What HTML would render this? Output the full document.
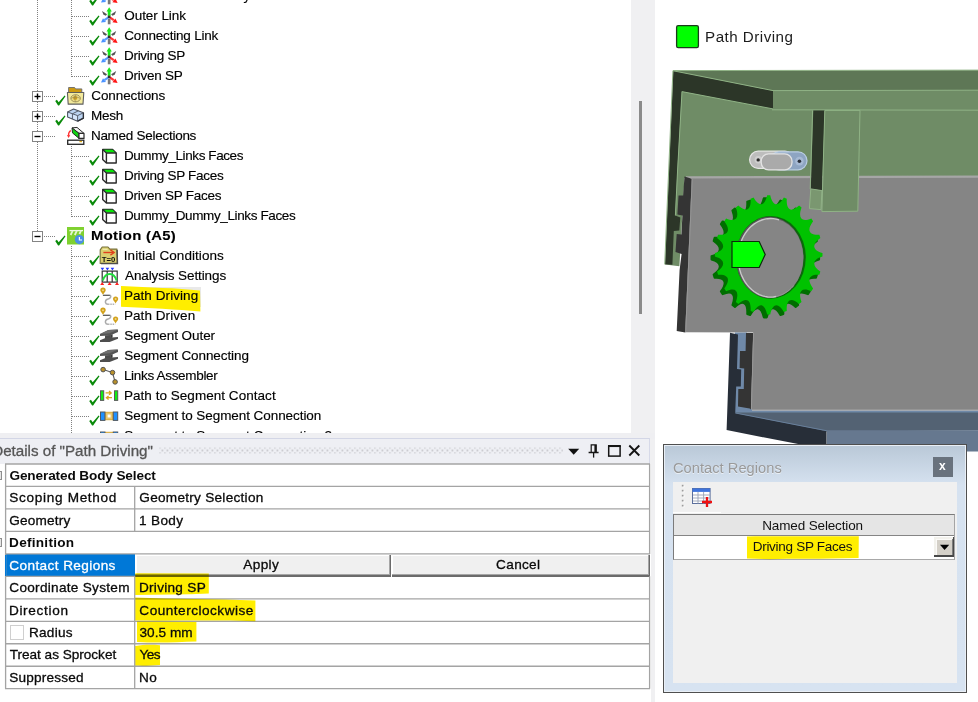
<!DOCTYPE html>
<html lang="en">
<head>
<meta charset="utf-8">
<title>Mechanical - Path Driving</title>
<style>
html,body{margin:0;padding:0;background:#fff;}
body{width:978px;height:702px;overflow:hidden;font-family:"Liberation Sans",sans-serif;color:#000;}
#app{position:relative;width:978px;height:702px;overflow:hidden;background:#fff;}
.t{position:absolute;white-space:nowrap;display:block;}
.abs{position:absolute;}
#tree{position:absolute;left:0;top:0;width:630.6px;height:433.5px;background:#fff;overflow:hidden;}
#tree svg{position:absolute;left:0;top:0;}
#gutter{position:absolute;left:630.6px;top:0;width:24.8px;height:702px;background:#f0f0f2;}
#thumb{position:absolute;left:8.5px;top:100.9px;width:2.9px;height:213.4px;background:#8b8b8b;}
#strip{position:absolute;left:0;top:433.4px;width:655.2px;height:6px;background:#efeff2;}
#dtitle{position:absolute;left:0;top:438.3px;width:650.4px;height:25.7px;background:#eeeff4;border-top:1.2px solid #d3d6e6;border-right:1.2px solid #d6d9e8;box-sizing:border-box;}
#dbody{position:absolute;left:0;top:464px;width:651px;height:238px;background:#fff;}
#dgrid{position:absolute;left:0;top:0;}
.hl{position:absolute;background:#ffee00;mix-blend-mode:multiply;}
#scene{position:absolute;left:655.3px;top:0;width:322.7px;height:702px;background:#fff;overflow:hidden;}
#scene svg{position:absolute;left:-655.3px;top:0;}
#dlg{position:absolute;left:663px;top:443.5px;width:304px;height:249.5px;box-sizing:border-box;border:1px solid #4f4f4f;background:linear-gradient(#b9c8d7 0px,#d6e2f0 40px,#d7e3f1 100%);box-shadow:inset 0 0 0 1px #e9eff6;}
.dt{-webkit-text-stroke:0.3px currentColor;}
.tr{-webkit-text-stroke:0.15px currentColor;}

</style>
</head>
<body>
<svg width="0" height="0" style="position:absolute">
<defs>

<!-- green status check, 10.5 x 10 -->
<g id="i-check"><path d="M0.2,5.6 L1.9,4.3 L3.7,6.8 L9.6,0 L10.5,0.7 L4.1,10 L3.1,10 Z" fill="#098a09"/></g>

<!-- coordinate system triad 16 x 17 -->
<g id="i-cs">
  <path d="M1,3.7 L6,7 L4.9,8.5 L2.5,7.5 Z" fill="#555"/>
  <path d="M15.2,3.7 L10.2,7 L11.3,8.5 L13.7,7.5 Z" fill="#555"/>
  <rect x="6.8" y="11.6" width="2.7" height="5.4" fill="#7a7a7a"/>
  <path d="M7.4,10 L3.4,12.8" stroke="#5a9cff" stroke-width="2.2"/>
  <path d="M0,15.3 L2,10.9 L5,14.6 Z" fill="#4a92ff"/>
  <path d="M8.8,10 L12.8,12.9" stroke="#ff3535" stroke-width="2.2"/>
  <path d="M16.6,15.6 L14.4,11.1 L11.4,14.9 Z" fill="#ff1515"/>
  <rect x="6.75" y="3.6" width="2.8" height="5" fill="#19e619"/>
  <path d="M8.15,0 L5.5,4.3 L10.8,4.3 Z" fill="#19e619"/>
  <rect x="6.8" y="8.3" width="2.7" height="2.6" fill="#333"/>
</g>

<!-- connections folder 17 x 17 -->
<g id="i-conn">
  <path d="M1.6,0.6 L7.6,0.6 L8.6,2 L14.8,2 L14.8,6 L1.6,6 Z" fill="#cc9a12" stroke="#6a6a6a" stroke-width="0.9" stroke-linejoin="round"/>
  <path d="M0.4,5.6 L16.8,5.6 L16,17.2 L1.2,17.2 Z" fill="#f3ea9c" stroke="#5e5e5e" stroke-width="1.1" stroke-linejoin="round"/>
  <ellipse cx="8.6" cy="11.4" rx="4.8" ry="3.6" fill="#ecdb82" stroke="#8e8250" stroke-width="0.8"/>
  <ellipse cx="8.2" cy="11" rx="2.1" ry="1.9" fill="#cfa020"/>
  <path d="M4,11.8 C6,9.6 11,9.6 13.2,11.8 M8.8,7.8 C7.4,9.8 7.6,12.8 8.6,15" fill="none" stroke="#8e8250" stroke-width="0.6"/>
</g>

<!-- mesh 17 x 13 -->
<g id="i-mesh">
  <path d="M0.6,3.6 L6.6,0.6 L16.4,4.4 L16.4,9.8 L10.6,12.8 L0.6,8.6 Z" fill="#bcd4f2" stroke="#4e5460" stroke-width="1.1" stroke-linejoin="round"/>
  <path d="M0.6,3.6 L10.6,7.2 L16.4,4.4 M10.6,7.2 L10.6,12.8 M5.4,5.4 L5.4,10.6 M5.4,5.4 L11.4,2.4" fill="none" stroke="#59606e" stroke-width="1"/>
  <path d="M1.5,4.8 L4.7,6 L4.7,9.4 L1.5,8.2 Z M6.3,6.6 L9.9,7.9 L9.9,11.6 L6.3,10.2 Z" fill="#d8e7fb"/>
  <path d="M10.6,12.8 L16.4,9.8 L16.4,4.4" fill="none" stroke="#2e3138" stroke-width="1.3" stroke-linejoin="round"/>
</g>

<!-- named selections 17 x 18 -->
<g id="i-ns">
  <path d="M5,1 L10,0.5 L17,6.5 L12,6.5 Z" fill="#f2f2f2" stroke="#2a2a2a" stroke-width="1" stroke-linejoin="round"/>
  <path d="M5,1 L12,6.5 L12,11.5 L5.5,6 Z" fill="#12d212" stroke="#2a2a2a" stroke-width="1" stroke-linejoin="round"/>
  <path d="M12,6.5 L17,6.5 L17,11.5 L12,11.5 Z" fill="#fff" stroke="#2a2a2a" stroke-width="1.2" stroke-linejoin="round"/>
  <path d="M3.8,3.6 C2,4.8 1.3,6.6 1.6,8.8" fill="none" stroke="#ff3030" stroke-width="1.3"/>
  <path d="M0,8 L3.3,8.3 L1.5,11 Z" fill="#ff3030"/>
  <rect x="0.7" y="13.3" width="16.1" height="4.1" fill="#fff" stroke="#262626" stroke-width="1.3"/>
  <rect x="12.4" y="14" width="2.6" height="1.3" fill="#e0b020"/>
</g>

<!-- face named selection cube 15 x 15 -->
<g id="i-face">
  <path d="M0.7,0.7 L10.6,0.7 L14.2,4.2 L14.2,14.2 L4.4,14.2 L0.7,10.6 Z" fill="#fff" stroke="#2a2a2a" stroke-width="1.4" stroke-linejoin="round"/>
  <path d="M1.2,1 L10.5,1 L13.6,4 L4.6,4 Z" fill="#06e606"/>
  <path d="M0.7,0.7 L4.4,4.2 L14.2,4.2 M4.4,4.2 L4.4,14.2" fill="none" stroke="#2a2a2a" stroke-width="1.4"/>
</g>

<!-- motion 17 x 17.5 -->
<g id="i-motion">
  <rect x="0" y="0" width="17" height="17.5" fill="#7fd12f"/>
  <path d="M2.4,3.6 L16,3.6" stroke="#f4fbe9" stroke-width="1.3"/>
  <path d="M5.6,3.8 L3.6,8 M9.8,3.8 L7.8,8 M14,3.8 L12.4,7" stroke="#e6f6d4" stroke-width="1.8"/>
  <circle cx="12.4" cy="12.6" r="4.6" fill="#4b8fe6"/>
  <path d="M12.4,10 L12.4,13 L15,13" fill="none" stroke="#fff" stroke-width="1.2"/>
</g>

<!-- initial conditions 19 x 18.5 -->
<g id="i-ic">
  <path d="M0.8,3.8 L2.8,0.9 L8.6,0.9 L10.4,3 L17.6,3 L18,17.4 L0.8,17.4 Z" fill="#dad070" stroke="#77703a" stroke-width="1.1" stroke-linejoin="round"/>
  <path d="M1.6,17.4 L18,17.4 L17.7,4" fill="none" stroke="#4c4c4c" stroke-width="1.5"/>
  <path d="M3.2,3.2 L8.2,3.2" stroke="#f3efc0" stroke-width="1"/>
  <path d="M4,6.4 L13.6,6.4" stroke="#e0401c" stroke-width="1.4"/>
  <path d="M11,3.8 L14.8,6.4 L11,9" fill="none" stroke="#e0401c" stroke-width="1.3"/>
</g>

<!-- analysis settings 19 x 18 -->
<g id="i-as">
  <rect x="2.4" y="4" width="15" height="11" fill="#fff" stroke="#333" stroke-width="1.2"/>
  <path d="M7.4,4 L7.4,15 M12.4,4 L12.4,15" stroke="#333" stroke-width="1.2"/>
  <path d="M3,13.4 C5.8,4.8 14,4.8 16.8,13.4" fill="none" stroke="#1fdc3a" stroke-width="1.9"/>
  <path d="M0.8,0.6 L4.4,0.6 L2.6,3.4 Z M5.8,0.6 L9.4,0.6 L7.6,3.4 Z M10.8,0.6 L14.4,0.6 L12.6,3.4 Z" fill="#2337ff"/>
  <path d="M0.4,17.8 L4.4,17.8 L2.4,15 Z M7.8,17.8 L11.8,17.8 L9.8,15 Z M15.2,17.8 L19.2,17.8 L17.2,15 Z" fill="#ff2020"/>
</g>

<!-- path 17 x 16 : origin = (100,287.5) -->
<g id="i-path">
  <path d="M9.9,7.8 C11.6,8.3 10.6,11 8.2,11.4 C6,11.9 5.2,13.4 5.5,15.1 C5.8,16.5 7,16.8 8,16.8" fill="none" stroke="#ababab" stroke-width="1.5"/>
  <path d="M8,16.8 L15.2,16.8" fill="none" stroke="#b4b4b4" stroke-width="1.4" stroke-dasharray="1.5 0.8"/>
  <path d="M2.9,7.8 L9.9,7.8" stroke="#5a5a5a" stroke-width="1.3"/>
  <path d="M3,7.3 C2,5.2 0.3,4.4 0.3,2.8 A2.7,2.7 0 0 1 5.7,2.8 C5.7,4.4 4,5.2 3,7.3 Z" fill="#d3a21c"/>
  <circle cx="3" cy="2.7" r="1" fill="#ecd38a"/>
  <path d="M15.6,15.9 C14.6,13.9 13,13.1 13,11.5 A2.6,2.6 0 0 1 18.2,11.5 C18.2,13.1 16.6,13.9 15.6,15.9 Z" fill="#d3a21c"/>
  <circle cx="15.6" cy="11.4" r="1" fill="#ecd38a"/>
</g>

<!-- segment I-beam 18 x 12.5 -->
<g id="i-seg">
  <path d="M0,4.4 L8.4,0.6 L18,0 L18,2.4 L10,6 L0,6.4 Z" fill="#555"/>
  <path d="M0,4.4 L8.4,0.6 L18,0 L9.6,3.8 Z" fill="#6e6e6e"/>
  <path d="M5,6 L10.4,5.6 L10.4,9.6 L5,10.2 Z" fill="#4a4a4a"/>
  <path d="M10.2,5.8 L12.6,4.8 L12.6,8 L10.2,9 Z" fill="#3c3c3c"/>
  <path d="M0,10.8 L5.4,8.6 L18,7.6 L18,9.2 L9.6,12.4 L0,12.6 Z" fill="#4e4e4e"/>
</g>

<!-- links assembler 16 x 16 : origin=(100.5,367) -->
<g id="i-links">
  <path d="M2.6,2.6 L12,5.6 L14.6,14.9" fill="none" stroke="#555" stroke-width="1.1"/>
  <circle cx="2.6" cy="2.6" r="2.3" fill="#b8902a" stroke="#555" stroke-width="1"/>
  <circle cx="12" cy="5.6" r="2.3" fill="#b8902a" stroke="#555" stroke-width="1"/>
  <circle cx="14.6" cy="14.9" r="2.3" fill="#b8902a" stroke="#555" stroke-width="1"/>
</g>

<!-- path-to-segment contact 18 x 10.5 -->
<g id="i-pcon">
  <rect x="0.5" y="0.5" width="3.2" height="9.6" fill="#12ee12" stroke="#5a5a5a" stroke-width="1"/>
  <rect x="14.5" y="0.5" width="3.2" height="9.6" fill="#12ee12" stroke="#5a5a5a" stroke-width="1"/>
  <path d="M5.6,2.6 L11,2.6 M9,0.8 L11.2,2.6 L9,4.4 M12,7.4 L6.6,7.4 M8.6,5.6 L6.4,7.4 L8.6,9.2" fill="none" stroke="#d8a520" stroke-width="1.3"/>
</g>

<!-- segment-to-segment connection 18 x 9.5 -->
<g id="i-scon">
  <rect x="5.4" y="0.8" width="7.4" height="7.4" fill="#e8c66a" stroke="#d8a93a" stroke-width="1"/>
  <rect x="7.6" y="3" width="3" height="3" fill="#fff"/>
  <rect x="0.5" y="0.5" width="4.4" height="8.4" fill="#1e90ff" stroke="#505860" stroke-width="1"/>
  <rect x="13.3" y="0.5" width="4.4" height="8.4" fill="#1e90ff" stroke="#505860" stroke-width="1"/>
</g>

</defs>
</svg>
<div id="app">
<div id="tree"><div class="abs" style="left:121.5px;top:286.5px;width:79px;height:20px;background:#e9e9e9"></div><svg width="631" height="434" style="pointer-events:none"><path d="M121,286 C150,287.5 176,288 200,290.5 L200.4,311.4 C176,309.5 150,308 121,306.8 Z" fill="#ffee00"/></svg><svg width="631" height="434" viewBox="0 0 631 434"><path d="M37.5,0 V91" stroke="#808080" stroke-width="1" stroke-dasharray="1 1" fill="none"/><path d="M37.5,102 V111" stroke="#808080" stroke-width="1" stroke-dasharray="1 1" fill="none"/><path d="M37.5,122 V131" stroke="#808080" stroke-width="1" stroke-dasharray="1 1" fill="none"/><path d="M37.5,142 V231" stroke="#808080" stroke-width="1" stroke-dasharray="1 1" fill="none"/><path d="M71.5,0 V77" stroke="#808080" stroke-width="1" stroke-dasharray="1 1" fill="none"/><path d="M71.5,146 V217" stroke="#808080" stroke-width="1" stroke-dasharray="1 1" fill="none"/><path d="M71.5,246 V434" stroke="#808080" stroke-width="1" stroke-dasharray="1 1" fill="none"/><path d="M72,-3.5 H90" stroke="#808080" stroke-width="1" stroke-dasharray="1 1" fill="none"/><use href="#i-cs" x="101" y="-12.7"/><use href="#i-check" x="89" y="-4.5"/><path d="M72,16.5 H90" stroke="#808080" stroke-width="1" stroke-dasharray="1 1" fill="none"/><use href="#i-cs" x="101" y="7.3"/><use href="#i-check" x="89" y="15.5"/><path d="M72,36.5 H90" stroke="#808080" stroke-width="1" stroke-dasharray="1 1" fill="none"/><use href="#i-cs" x="101" y="27.3"/><use href="#i-check" x="89" y="35.5"/><path d="M72,56.5 H90" stroke="#808080" stroke-width="1" stroke-dasharray="1 1" fill="none"/><use href="#i-cs" x="101" y="47.3"/><use href="#i-check" x="89" y="55.5"/><path d="M72,76.5 H90" stroke="#808080" stroke-width="1" stroke-dasharray="1 1" fill="none"/><use href="#i-cs" x="101" y="67.3"/><use href="#i-check" x="89" y="75.5"/><path d="M44,96.5 H56" stroke="#808080" stroke-width="1" stroke-dasharray="1 1" fill="none"/><rect x="32.5" y="91.5" width="10" height="10" fill="#fff" stroke="#848484" stroke-width="1"/><path d="M34.5,96.5 H40.5" stroke="#000" stroke-width="1.4"/><path d="M37.5,93.5 V99.5" stroke="#000" stroke-width="1.4"/><use href="#i-conn" x="67" y="86.9"/><use href="#i-check" x="55" y="95.5"/><path d="M44,116.5 H56" stroke="#808080" stroke-width="1" stroke-dasharray="1 1" fill="none"/><rect x="32.5" y="111.5" width="10" height="10" fill="#fff" stroke="#848484" stroke-width="1"/><path d="M34.5,116.5 H40.5" stroke="#000" stroke-width="1.4"/><path d="M37.5,113.5 V119.5" stroke="#000" stroke-width="1.4"/><use href="#i-mesh" x="67" y="108.4"/><use href="#i-check" x="55" y="115.5"/><path d="M44,136.5 H56" stroke="#808080" stroke-width="1" stroke-dasharray="1 1" fill="none"/><rect x="32.5" y="131.5" width="10" height="10" fill="#fff" stroke="#848484" stroke-width="1"/><path d="M34.5,136.5 H40.5" stroke="#000" stroke-width="1.4"/><use href="#i-ns" x="67" y="126.9"/><path d="M72,156.5 H90" stroke="#808080" stroke-width="1" stroke-dasharray="1 1" fill="none"/><use href="#i-face" x="102" y="148.8"/><use href="#i-check" x="89" y="155.5"/><path d="M72,176.5 H90" stroke="#808080" stroke-width="1" stroke-dasharray="1 1" fill="none"/><use href="#i-face" x="102" y="168.8"/><use href="#i-check" x="89" y="175.5"/><path d="M72,196.5 H90" stroke="#808080" stroke-width="1" stroke-dasharray="1 1" fill="none"/><use href="#i-face" x="102" y="188.8"/><use href="#i-check" x="89" y="195.5"/><path d="M72,216.5 H90" stroke="#808080" stroke-width="1" stroke-dasharray="1 1" fill="none"/><use href="#i-face" x="102" y="208.8"/><use href="#i-check" x="89" y="215.5"/><path d="M44,236.5 H56" stroke="#808080" stroke-width="1" stroke-dasharray="1 1" fill="none"/><rect x="32.5" y="231.5" width="10" height="10" fill="#fff" stroke="#848484" stroke-width="1"/><path d="M34.5,236.5 H40.5" stroke="#000" stroke-width="1.4"/><use href="#i-motion" x="67" y="227.0"/><use href="#i-check" x="55" y="235.5"/><path d="M72,256.5 H90" stroke="#808080" stroke-width="1" stroke-dasharray="1 1" fill="none"/><use href="#i-ic" x="99.4" y="246.1"/><text x="101.80000000000001" y="261.9" font-family="Liberation Sans, sans-serif" font-size="8" font-weight="700" fill="#111" textLength="13.6" lengthAdjust="spacingAndGlyphs">T=0</text><use href="#i-check" x="89" y="255.5"/><path d="M72,276.5 H90" stroke="#808080" stroke-width="1" stroke-dasharray="1 1" fill="none"/><use href="#i-as" x="99.8" y="267.1"/><use href="#i-check" x="89" y="275.5"/><path d="M72,296.5 H90" stroke="#808080" stroke-width="1" stroke-dasharray="1 1" fill="none"/><use href="#i-path" x="100" y="287.5"/><use href="#i-check" x="89" y="295.5"/><path d="M72,316.5 H90" stroke="#808080" stroke-width="1" stroke-dasharray="1 1" fill="none"/><use href="#i-path" x="100" y="307.5"/><use href="#i-check" x="89" y="315.5"/><path d="M72,336.5 H90" stroke="#808080" stroke-width="1" stroke-dasharray="1 1" fill="none"/><use href="#i-seg" x="100" y="329.5"/><use href="#i-check" x="89" y="335.5"/><path d="M72,356.5 H90" stroke="#808080" stroke-width="1" stroke-dasharray="1 1" fill="none"/><use href="#i-seg" x="100" y="349.5"/><use href="#i-check" x="89" y="355.5"/><path d="M72,376.5 H90" stroke="#808080" stroke-width="1" stroke-dasharray="1 1" fill="none"/><use href="#i-links" x="100.5" y="367.0"/><use href="#i-check" x="89" y="375.5"/><path d="M72,396.5 H90" stroke="#808080" stroke-width="1" stroke-dasharray="1 1" fill="none"/><use href="#i-pcon" x="100" y="390.3"/><use href="#i-check" x="89" y="395.5"/><path d="M72,416.5 H90" stroke="#808080" stroke-width="1" stroke-dasharray="1 1" fill="none"/><use href="#i-scon" x="100" y="411.5"/><use href="#i-check" x="89" y="415.5"/><path d="M72,436.5 H90" stroke="#808080" stroke-width="1" stroke-dasharray="1 1" fill="none"/><use href="#i-scon" x="100" y="431.5"/><use href="#i-check" x="89" y="435.5"/></svg><span id="tr0" class="t tr" style="left:125.32px;top:-12.58px;font-size:13.5px;line-height:18px;letter-spacing:-0.177px;">Global Coordinate System</span><span id="tr1" class="t tr" style="left:124.32px;top:7.02px;font-size:13.5px;line-height:18px;letter-spacing:-0.073px;">Outer Link</span><span id="tr2" class="t tr" style="left:124.32px;top:27.02px;font-size:13.5px;line-height:18px;letter-spacing:-0.201px;">Connecting Link</span><span id="tr3" class="t tr" style="left:123.92px;top:47.02px;font-size:13.5px;line-height:18px;letter-spacing:-0.263px;">Driving SP</span><span id="tr4" class="t tr" style="left:123.92px;top:67.02px;font-size:13.5px;line-height:18px;letter-spacing:-0.249px;">Driven SP</span><span id="tr5" class="t tr" style="left:91.32px;top:87.02px;font-size:13.5px;line-height:18px;letter-spacing:-0.115px;">Connections</span><span id="tr6" class="t tr" style="left:90.92px;top:107.02px;font-size:13.5px;line-height:18px;letter-spacing:-0.250px;">Mesh</span><span id="tr7" class="t tr" style="left:90.92px;top:127.02px;font-size:13.5px;line-height:18px;letter-spacing:-0.273px;">Named Selections</span><span id="tr8" class="t tr" style="left:123.92px;top:147.02px;font-size:13.5px;line-height:18px;letter-spacing:-0.404px;">Dummy_Links Faces</span><span id="tr9" class="t tr" style="left:123.92px;top:167.02px;font-size:13.5px;line-height:18px;letter-spacing:-0.278px;">Driving SP Faces</span><span id="tr10" class="t tr" style="left:123.92px;top:187.02px;font-size:13.5px;line-height:18px;letter-spacing:-0.250px;">Driven SP Faces</span><span id="tr11" class="t tr" style="left:123.92px;top:207.02px;font-size:13.5px;line-height:18px;letter-spacing:-0.376px;">Dummy_Dummy_Links Faces</span><span id="tr12" class="t tr" style="left:90.96px;top:227.02px;font-size:13.5px;line-height:18px;letter-spacing:0.282px;font-weight:700;transform:scaleX(1.1);transform-origin:0 0;">Motion (A5)</span><span id="tr13" class="t tr" style="left:123.78px;top:247.02px;font-size:13.5px;line-height:18px;letter-spacing:0.057px;">Initial Conditions</span><span id="tr14" class="t tr" style="left:125.00px;top:267.02px;font-size:13.5px;line-height:18px;letter-spacing:-0.102px;">Analysis Settings</span><span id="tr15" class="t tr" style="left:123.92px;top:287.02px;font-size:13.5px;line-height:18px;letter-spacing:0.068px;">Path Driving</span><span id="tr16" class="t tr" style="left:123.92px;top:307.02px;font-size:13.5px;line-height:18px;letter-spacing:0.072px;">Path Driven</span><span id="tr17" class="t tr" style="left:124.32px;top:327.02px;font-size:13.5px;line-height:18px;letter-spacing:-0.065px;">Segment Outer</span><span id="tr18" class="t tr" style="left:124.32px;top:347.02px;font-size:13.5px;line-height:18px;letter-spacing:-0.086px;">Segment Connecting</span><span id="tr19" class="t tr" style="left:123.92px;top:367.02px;font-size:13.5px;line-height:18px;letter-spacing:-0.316px;">Links Assembler</span><span id="tr20" class="t tr" style="left:123.92px;top:387.02px;font-size:13.5px;line-height:18px;letter-spacing:0.040px;">Path to Segment Contact</span><span id="tr21" class="t tr" style="left:124.32px;top:407.02px;font-size:13.5px;line-height:18px;letter-spacing:-0.067px;">Segment to Segment Connection</span><span id="tr22" class="t tr" style="left:124.32px;top:427.02px;font-size:13.5px;line-height:18px;letter-spacing:-0.078px;">Segment to Segment Connection 2</span></div>
<div id="gutter"><div id="thumb"></div></div>
<div id="details"><div id="strip"></div><div id="dtitle"></div><span id="dt" class="t dt" style="left:-7.82px;top:440.73px;font-size:15.2px;line-height:20px;letter-spacing:-0.012px;color:#565656;">Details of "Path Driving"</span><svg class="abs" style="left:0;top:436px" width="655" height="30" viewBox="0 436 655 30">
<defs><pattern id="grip" x="159.3" y="447.4" width="5" height="5" patternUnits="userSpaceOnUse">
<rect x="0" y="0" width="1.3" height="1.2" fill="#bcbcc0"/><rect x="2.5" y="2.5" width="1.3" height="1.2" fill="#a0a0a4"/></pattern></defs>
<rect x="159.3" y="447.4" width="403.5" height="6.3" fill="url(#grip)"/>
<path d="M568.2,448.8 L579.2,448.8 L573.7,454.8 Z" fill="#111"/>
<g fill="none" stroke="#151515">
<path d="M591.2,452 V444.9 H596.2 V452" stroke-width="1.2"/>
<path d="M595.4,445 V452" stroke-width="2"/>
<path d="M588.6,452.5 H598.6" stroke-width="1.5"/>
<path d="M593.6,453 V457.6" stroke-width="1.3"/>
<rect x="608.7" y="446.3" width="11.4" height="9.8" stroke-width="1.5"/>
<path d="M608,446 H620.8" stroke-width="2"/>
<path d="M629.3,445.5 L639.3,455.5 M639.3,445.5 L629.3,455.5" stroke-width="1.9"/>
</g></svg><div id="dbody"></div><div class="abs" style="left:-7px;top:471.0px;width:9px;height:9px;box-sizing:border-box;border:1px solid #8e8e8e;background:#e6e6e6"></div><div class="abs" style="left:-7px;top:538.4px;width:9px;height:9px;box-sizing:border-box;border:1px solid #8e8e8e;background:#e6e6e6"></div><div class="abs" style="left:5px;top:554.2px;width:129.6px;height:22.5px;background:#0078d7"></div><div class="abs" style="left:135.4px;top:555.1px;width:255.79999999999998px;height:21.9px;background:#6b6b6b"></div><div class="abs" style="left:135.4px;top:555.1px;width:254.39999999999998px;height:19.7px;background:#a6a6a6"></div><div class="abs" style="left:135.4px;top:555.1px;width:253.39999999999998px;height:18.7px;background:#fff"></div><div class="abs" style="left:136.6px;top:556.3px;width:252.2px;height:17.5px;background:#f0f0f0"></div><span id="bt1" class="t dt" style="left:243.30px;top:555.97px;font-size:13.6px;line-height:18px;letter-spacing:0.375px;color:#0a0a0a;">Apply</span><div class="abs" style="left:391.6px;top:555.1px;width:258.4px;height:21.9px;background:#6b6b6b"></div><div class="abs" style="left:391.6px;top:555.1px;width:257.0px;height:19.7px;background:#a6a6a6"></div><div class="abs" style="left:391.6px;top:555.1px;width:255.99999999999997px;height:18.7px;background:#fff"></div><div class="abs" style="left:392.8px;top:556.3px;width:254.79999999999998px;height:17.5px;background:#f0f0f0"></div><span id="bt2" class="t dt" style="left:496.12px;top:555.97px;font-size:13.6px;line-height:18px;letter-spacing:0.320px;color:#0a0a0a;">Cancel</span><svg id="dgrid" class="abs" style="left:0;top:0" width="655" height="702" viewBox="0 0 655 702"><g stroke="#a4a4a4" stroke-width="1.3" fill="none"><path d="M5,464.00 H650"/><path d="M5,486.47 H650"/><path d="M5,508.94 H650"/><path d="M5,531.41 H650"/><path d="M5,553.88 H650"/><path d="M5,576.35 H135"/><path d="M5,598.82 H650"/><path d="M5,621.29 H650"/><path d="M5,643.76 H650"/><path d="M5,666.23 H650"/><path d="M5,688.70 H650"/><path d="M5.6,464.00 V688.70 M649.6,464.00 V553.88 M649.6,576.35 V688.70"/><path d="M134.7,486.47 V531.41 M134.7,576.35 V688.70"/></g></svg><div class="abs" style="left:5px;top:554.6px;width:1.4px;height:21.3px;background:#0078d7"></div><svg class="abs" style="left:0;top:0;mix-blend-mode:multiply" width="655" height="702" viewBox="0 0 655 702">
<g fill="#ffee00">
<path d="M135.3,573.2 L208.8,573.6 L208.8,593.4 C185,594.6 160,594.4 135.3,595 Z"/>
<path d="M135.3,597.4 C175,599.4 215,598.4 255.4,600.6 L255.4,621.2 C215,620 175,621 135.3,620.6 Z"/>
<path d="M137,621.6 L196.4,622 L196.4,641.6 C176,642.4 156,643.2 137,642 Z"/>
<path d="M135.3,646 C143,644.6 152,644.6 160,645.2 L160,665 C152,665.6 143,666 135.3,665.6 Z"/>
</g></svg><div class="abs" style="left:9.6px;top:625.2px;width:14.2px;height:14.6px;box-sizing:border-box;border:1px solid #cfcfcf;background:#fff"></div><span id="dn0" class="t " style="left:9.46px;top:466.69px;font-size:13.6px;line-height:18px;letter-spacing:-0.122px;color:#0a0a0a;font-weight:700;">Generated Body Select</span><span id="dn1" class="t dt" style="left:9.32px;top:489.16px;font-size:13.6px;line-height:18px;letter-spacing:0.677px;color:#0a0a0a;">Scoping Method</span><span id="dv1" class="t dt" style="left:139.32px;top:489.16px;font-size:13.6px;line-height:18px;letter-spacing:0.270px;color:#0a0a0a;">Geometry Selection</span><span id="dn2" class="t dt" style="left:9.32px;top:511.63px;font-size:13.6px;line-height:18px;letter-spacing:0.182px;color:#0a0a0a;">Geometry</span><span id="dv2" class="t dt" style="left:138.91px;top:511.63px;font-size:13.6px;line-height:18px;letter-spacing:0.358px;color:#0a0a0a;">1 Body</span><span id="dn3" class="t " style="left:9.05px;top:534.10px;font-size:13.6px;line-height:18px;letter-spacing:0.264px;color:#0a0a0a;font-weight:700;">Definition</span><span id="dn4" class="t dt" style="left:9.32px;top:556.57px;font-size:13.6px;line-height:18px;letter-spacing:0.399px;color:#fff;">Contact Regions</span><span id="dn5" class="t dt" style="left:9.32px;top:579.04px;font-size:13.6px;line-height:18px;letter-spacing:0.287px;color:#0a0a0a;">Coordinate System</span><span id="dv5" class="t dt" style="left:138.91px;top:579.04px;font-size:13.6px;line-height:18px;letter-spacing:0.286px;color:#0a0a0a;">Driving SP</span><span id="dn6" class="t dt" style="left:8.91px;top:601.51px;font-size:13.6px;line-height:18px;letter-spacing:0.690px;color:#0a0a0a;">Direction</span><span id="dv6" class="t dt" style="left:139.32px;top:601.51px;font-size:13.6px;line-height:18px;letter-spacing:0.502px;color:#0a0a0a;">Counterclockwise</span><span id="dn7" class="t dt" style="left:28.91px;top:623.98px;font-size:13.6px;line-height:18px;letter-spacing:0.280px;color:#0a0a0a;">Radius</span><span id="dv7" class="t dt" style="left:139.46px;top:623.98px;font-size:13.6px;line-height:18px;letter-spacing:0.049px;color:#0a0a0a;">30.5 mm</span><span id="dn8" class="t dt" style="left:9.73px;top:646.45px;font-size:13.6px;line-height:18px;letter-spacing:-0.018px;color:#0a0a0a;">Treat as Sprocket</span><span id="dv8" class="t dt" style="left:139.59px;top:646.45px;font-size:13.6px;line-height:18px;letter-spacing:-0.600px;color:#0a0a0a;">Yes</span><span id="dn9" class="t dt" style="left:9.32px;top:668.92px;font-size:13.6px;line-height:18px;letter-spacing:0.201px;color:#0a0a0a;">Suppressed</span><span id="dv9" class="t dt" style="left:138.91px;top:668.92px;font-size:13.6px;line-height:18px;letter-spacing:0.500px;color:#0a0a0a;">No</span></div>
<div id="scene"><svg width="978" height="702" viewBox="0 0 978 702"><path d="M673.3,70.8 L978,70.3 L978,178 L684.5,178 L679.4,266.2 L665,264.4 Z" fill="#6f8c66"/><path d="M673.3,70.8 L978,70.3 L978,90.3 L773,90.8 Z" fill="#5e7756"/><path d="M673.3,70.8 L773,90.8 L773,108.9 L681.8,91.6 L677.4,170 L675.2,215.6 L680.3,217.6 L679.3,230.6 L673.8,231 L672.4,264.8 L665.1,264.2 Z" fill="#2c3628"/><g fill="none" stroke="#90b386" stroke-width="1"><path d="M672.9,70.6 L978,70.1"/><path d="M673.3,70.8 L773,90.6 L978,90.2"/><path d="M672.9,70.8 L664.7,264.4"/><path d="M772,109.8 L978,110.2"/><path d="M681.8,91.6 L773,108.9"/><path d="M682,91.8 L677.6,170 L675.4,215.4"/></g><path d="M691.6,177.2 L978,176 L978,410.4 L751,410.4 L753.2,332.6 L685,332.2 Z" fill="#858585"/><path d="M686,177.4 L978,176.6" stroke="#a6a6a6" stroke-width="2.2"/><path d="M752,409.9 L978,409.9" stroke="#a0a0a0" stroke-width="1"/><path d="M684.5,176.4 L691.8,178.8 L685.2,332.4 L676.7,331 L679.6,270 L681.6,254 L675.5,251.9 L676.7,234 L681.4,234.4 L682.4,215.5 L677.4,214.4 L678.5,195.6 L683.1,195.6 Z" fill="#343434"/><path d="M692.2,179 L685.7,332" stroke="#9c9c9c" stroke-width="0.8" fill="none"/><path d="M813.3,110.5 L824.8,110.5 L821.9,190.6 L810.8,188.9 Z" fill="#2c3628"/><path d="M810.8,188.9 L821.9,190.6 L821,209.6 L809.4,208.6 Z" fill="#7a9770" stroke="#90b386" stroke-width="1"/><path d="M812.6,110.5 L810.2,189" stroke="#90b386" stroke-width="1" fill="none"/><path d="M824.8,110.4 L860,110.4 L857.8,211.2 L821.9,211.6 Z" fill="#6f8c66" stroke="#90b386" stroke-width="1"/><rect x="749.6" y="151.2" width="44" height="17.2" rx="8.6" fill="#bdbdbd" stroke="#e6e6e6" stroke-width="1.2"/><rect x="770" y="151.8" width="37" height="18" rx="9" fill="#8ea5c2" stroke="#b9cde4" stroke-width="1.2"/><circle cx="758.4" cy="159.7" r="3.8" fill="#cfcfcf"/><circle cx="758.2" cy="159.9" r="1.7" fill="#2a2a2a"/><circle cx="799.4" cy="161.1" r="4.3" fill="#a7bad4"/><circle cx="799.4" cy="161.3" r="1.8" fill="#2a303a"/><rect x="761.2" y="153.9" width="30.8" height="16" rx="7.4" fill="#aaaaaa" stroke="#e3e3e3" stroke-width="1.3"/><path d="M763.78,198.22 L766.82,198.22 C769.43,209.44 774.86,210.40 780.47,200.62 L783.36,201.66 C782.71,213.22 787.62,215.99 795.68,208.61 L798.14,210.59 C794.30,221.36 798.19,225.68 807.91,221.42 L809.70,224.15 C803.04,233.07 805.54,238.51 815.98,237.79 L816.92,240.99 C808.09,247.20 808.95,253.23 819.08,256.12 L819.08,259.48 C808.95,262.37 808.09,268.40 816.92,274.61 L815.98,277.81 C805.54,277.09 803.04,282.53 809.70,291.45 L807.91,294.18 C798.19,289.92 794.30,294.24 798.14,305.01 L795.68,306.99 C787.62,299.61 782.71,302.38 783.36,313.94 L780.47,314.98 C774.86,305.20 769.43,306.16 766.82,317.38 L763.78,317.38 C761.17,306.16 755.74,305.20 750.13,314.98 L747.24,313.94 C747.89,302.38 742.98,299.61 734.92,306.99 L732.46,305.01 C736.30,294.24 732.41,289.92 722.69,294.18 L720.90,291.45 C727.56,282.53 725.06,277.09 714.62,277.81 L713.68,274.61 C722.51,268.40 721.65,262.37 711.52,259.48 L711.52,256.12 C721.65,253.23 722.51,247.20 713.68,240.99 L714.62,237.79 C725.06,238.51 727.56,233.07 720.90,224.15 L722.69,221.42 C732.41,225.68 736.30,221.36 732.46,210.59 L734.92,208.61 C742.98,215.99 747.89,213.22 747.24,201.66 L750.13,200.62 C755.74,210.40 761.17,209.44 763.78,198.22 Z" fill="#006e00" stroke="#006e00" stroke-width="2" stroke-linejoin="round"/><path d="M767.18,195.22 L770.22,195.22 C772.83,206.44 778.26,207.40 783.87,197.62 L786.76,198.66 C786.11,210.22 791.02,212.99 799.08,205.61 L801.54,207.59 C797.70,218.36 801.59,222.68 811.31,218.42 L813.10,221.15 C806.44,230.07 808.94,235.51 819.38,234.79 L820.32,237.99 C811.49,244.20 812.35,250.23 822.48,253.12 L822.48,256.48 C812.35,259.37 811.49,265.40 820.32,271.61 L819.38,274.81 C808.94,274.09 806.44,279.53 813.10,288.45 L811.31,291.18 C801.59,286.92 797.70,291.24 801.54,302.01 L799.08,303.99 C791.02,296.61 786.11,299.38 786.76,310.94 L783.87,311.98 C778.26,302.20 772.83,303.16 770.22,314.38 L767.18,314.38 C764.57,303.16 759.14,302.20 753.53,311.98 L750.64,310.94 C751.29,299.38 746.38,296.61 738.32,303.99 L735.86,302.01 C739.70,291.24 735.81,286.92 726.09,291.18 L724.30,288.45 C730.96,279.53 728.46,274.09 718.02,274.81 L717.08,271.61 C725.91,265.40 725.05,259.37 714.92,256.48 L714.92,253.12 C725.05,250.23 725.91,244.20 717.08,237.99 L718.02,234.79 C728.46,235.51 730.96,230.07 724.30,221.15 L726.09,218.42 C735.81,222.68 739.70,218.36 735.86,207.59 L738.32,205.61 C746.38,212.99 751.29,210.22 750.64,198.66 L753.53,197.62 C759.14,207.40 764.57,206.44 767.18,195.22 Z" fill="#00c200"/><ellipse cx="770.8" cy="257.3" rx="35" ry="41.4" fill="#0a6a0a"/><ellipse cx="769.7" cy="257.5" rx="33.9" ry="40.7" fill="#575757"/><ellipse cx="770.7" cy="257.8" rx="32.7" ry="39.5" fill="#858585"/><path d="M776.34,296.50 L773.46,296.96 L770.56,297.10 L767.66,296.93 L764.78,296.44 L761.95,295.65 L759.19,294.55 L756.52,293.16 L753.96,291.49 L751.54,289.54 L749.27,287.35 L747.17,284.91 L745.27,282.26 L743.56,279.42 L742.07,276.40 L740.81,273.23 L739.79,269.94 L739.02,266.56 L738.50,263.10 L738.23,259.60 L738.23,256.09 L738.49,252.59 L739.00,249.13 L739.77,245.74 L740.78,242.44 L742.04,239.27 L743.52,236.25 L745.22,233.40 L747.13,230.75 L749.22,228.31 L751.48,226.11 L753.90,224.16 L756.45,222.48 L759.12,221.08 L761.88,219.98 L764.71,219.17 L767.59,218.68 L770.49,218.50 L773.39,218.63 L776.27,219.08 L779.11,219.84" fill="none" stroke="#c8c8c8" stroke-width="1.4"/><path d="M793.68,285.59 L793.33,286.01 L792.97,286.42 L792.60,286.83 L792.24,287.23 L791.86,287.63 L791.48,288.02 L791.10,288.40 L790.71,288.77 L790.32,289.13 L789.92,289.49 L789.52,289.84 L789.11,290.19 L788.70,290.52 L788.28,290.85 L787.86,291.17 L787.44,291.49 L787.01,291.79 L786.58,292.09 L786.15,292.38 L785.71,292.66 L785.26,292.93 L784.82,293.20 L784.37,293.45 L783.92,293.70 L783.46,293.94 L783.01,294.17 L782.55,294.40 L782.08,294.61 L781.62,294.82 L781.15,295.01 L780.68,295.20 L780.20,295.38 L779.73,295.55 L779.25,295.72 L778.77,295.87 L778.29,296.01 L777.80,296.15 L777.32,296.28 L776.83,296.39 L776.34,296.50" fill="none" stroke="#a4a4a4" stroke-width="1"/><path d="M732,241.5 L759.2,241.5 L765.2,254.5 L759.2,267.5 L732,267.5 Z" fill="#00ff00" stroke="#0c2a0c" stroke-width="1.2" stroke-linejoin="miter"/><path d="M735,332.6 L747,332.6 L746,351.6 L745,406 L752,409 L752,412.6 L734,412.6 Z" fill="#6f89a8"/><path d="M746,333 L753.2,333 L751,409.4 L749.7,408.4 L738,406.6 L738.3,389 L743.8,389 L744.2,368.5 L739.6,368 L740,351 L745.6,351 Z" fill="#343434"/><path d="M753.6,333 L751.4,409.6" stroke="#9c9c9c" stroke-width="0.8" fill="none"/><path d="M734.6,411.4 L978,411.4 L978,430.4 L826.7,431.6 L734.6,415 Z" fill="#536273"/><path d="M735.2,411.6 L978,411.6" stroke="#6f89a8" stroke-width="1.8"/><path d="M826.7,430.3 L978,430.3 L978,451.4 L826.7,451.4 Z" fill="#66788f"/><path d="M730,332.8 L738,334.6 L737,369 L741.2,369.6 L740.8,386.6 L736.2,386.6 L735.2,413.2 L826.5,430.9 L826.5,449.6 L726.6,430.1 Z" fill="#272e38"/><path d="M735.4,413 L826.9,430.8" stroke="#6c84a2" stroke-width="0.9" fill="none"/><rect x="676.6" y="25.6" width="21.8" height="22" rx="1.6" fill="#00ff00" stroke="#1b3b1b" stroke-width="1.3"/></svg><span id="lg" class="t " style="left:49.78px;top:26.53px;font-size:15.2px;line-height:20px;letter-spacing:0.467px;color:#1c1c1c;">Path Driving</span></div>
<div id="dlg"><span id="dl0" class="t " style="left:8.97px;top:13.86px;font-size:15.4px;line-height:20px;letter-spacing:0.049px;color:#9a9a9a;transform:scaleX(0.95);transform-origin:0 0;text-shadow:0 1px 0 rgba(255,255,255,.55);">Contact Regions</span><div class="abs" style="left:269.0px;top:12.5px;width:20px;height:20px;background:#69727d"></div><span id="dlx" class="t " style="left:275.08px;top:13.34px;font-size:12px;line-height:16px;letter-spacing:0.000px;color:#fff;font-weight:700;">x</span><div class="abs" style="left:9.0px;top:37.5px;width:283.7px;height:201.3px;background:#f0f0f0"></div><svg class="abs" style="left:9.0px;top:37.5px" width="284" height="32" viewBox="673 482 284 32">
<g fill="#fff"><rect x="682.7" y="485.6" width="1.7" height="1.7"/><rect x="682.7" y="490.6" width="1.7" height="1.7"/><rect x="682.7" y="495.6" width="1.7" height="1.7"/><rect x="682.7" y="500.6" width="1.7" height="1.7"/><rect x="682.7" y="505.6" width="1.7" height="1.7"/></g>
<g fill="#9c9c9c"><rect x="681.8" y="484.8" width="1.7" height="1.7"/><rect x="681.8" y="489.8" width="1.7" height="1.7"/><rect x="681.8" y="494.8" width="1.7" height="1.7"/><rect x="681.8" y="499.8" width="1.7" height="1.7"/><rect x="681.8" y="504.8" width="1.7" height="1.7"/></g>
<rect x="692.5" y="488.5" width="17.6" height="15" fill="#fff" stroke="#5b6f9c" stroke-width="1"/>
<rect x="692.5" y="488.5" width="17.6" height="3.4" fill="#3f74dc"/>
<path d="M693,495 H710 M693,498 H710 M693,501 H710 M698,492 V503.5 M703.6,492 V503.5" stroke="#9aa3b5" stroke-width="0.9"/>
<path d="M702,502 H712 M707,497 V507" stroke="#ee1111" stroke-width="2.3"/>
<path d="M673,512.4 H721" stroke="#fff" stroke-width="1"/>
</svg><div class="abs" style="left:9.299999999999955px;top:69.10000000000002px;width:282.2px;height:46px;box-sizing:border-box;border:1px solid #7b7b7b;border-right-color:#a4a4a4;border-bottom-color:#a8a8a8;background:#fff"></div><div class="abs" style="left:10.299999999999955px;top:70.10000000000002px;width:280.2px;height:20.3px;background:#e5e5e5;border-bottom:1px solid #858585"></div><svg class="abs" style="left:76.0px;top:89.5px;mix-blend-mode:multiply" width="130" height="28" viewBox="740 534 130 28"><path d="M747,536.4 C780,535.8 820,536.6 858.8,536.2 L858.6,558 C820,559.2 790,558.4 770,559.2 L747,558.6 Z" fill="#ffee00"/></svg><span id="dl1" class="t " style="left:98.22px;top:72.62px;font-size:13.5px;line-height:18px;letter-spacing:-0.139px;color:#111;">Named Selection</span><span id="dl2" class="t " style="left:88.72px;top:93.42px;font-size:13.5px;line-height:18px;letter-spacing:-0.284px;color:#111;">Driving SP Faces</span><div class="abs" style="left:270.20000000000005px;top:92.70000000000005px;width:19.9px;height:19.4px;background:#484848"></div><div class="abs" style="left:270.20000000000005px;top:92.70000000000005px;width:18.799999999999997px;height:18.299999999999997px;background:#f2f1ec"></div><div class="abs" style="left:271.6px;top:94.10000000000002px;width:17.4px;height:16.9px;background:#7c7c7c"></div><div class="abs" style="left:271.6px;top:94.10000000000002px;width:16.6px;height:16.0px;background:#fbfaf8"></div><div class="abs" style="left:273.0px;top:95.5px;width:15.2px;height:14.6px;background:#d4d0c8"></div><svg class="abs" style="left:270.0px;top:92.5px" width="22" height="22" viewBox="934 537 22 22"><path d="M940,544.8 L949.2,544.8 L944.6,550 Z" fill="#000"/></svg></div>
</div>
</body>
</html>
